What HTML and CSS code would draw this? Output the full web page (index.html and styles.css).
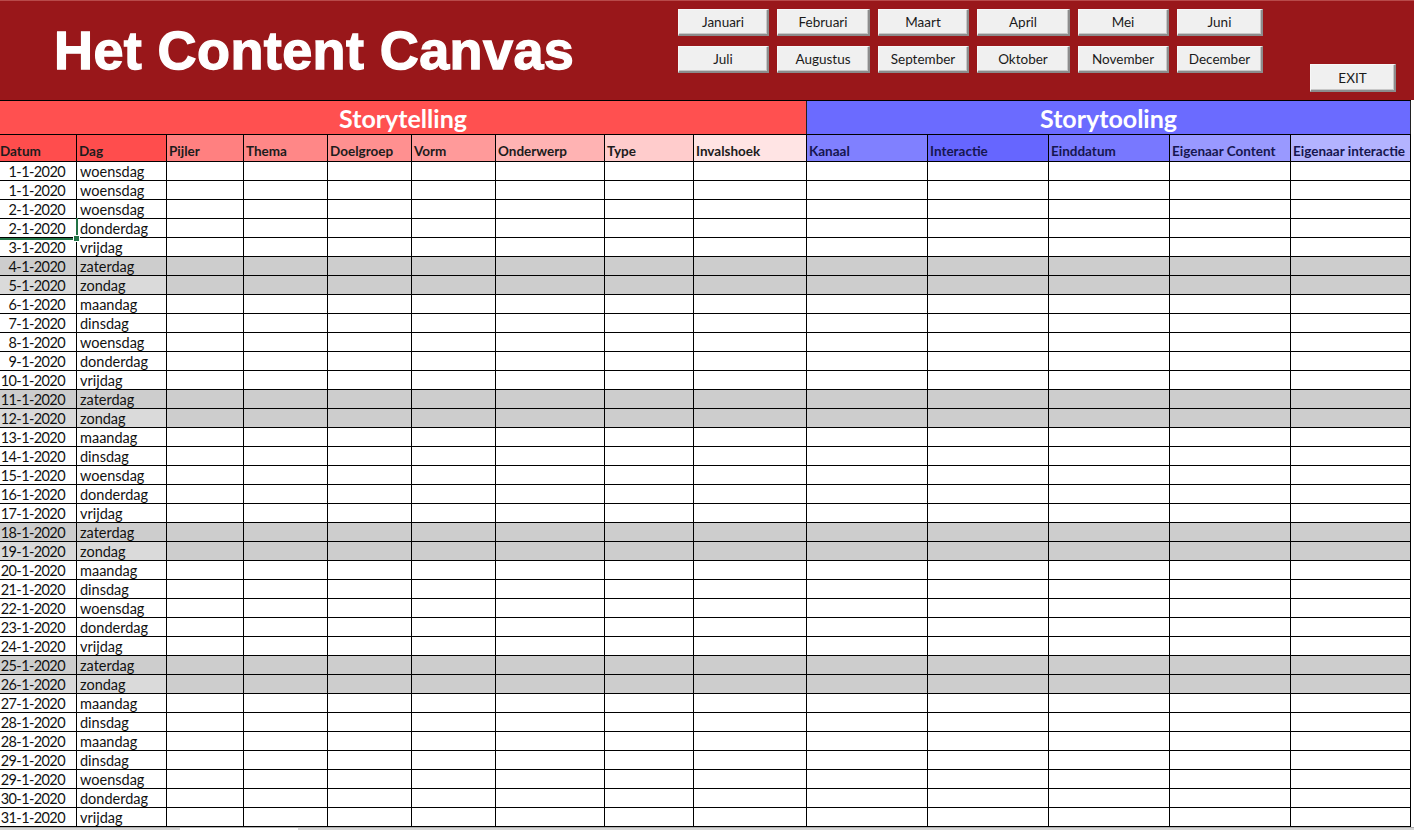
FILE: index.html
```html
<!DOCTYPE html>
<html lang="nl">
<head>
<meta charset="utf-8">
<title>Het Content Canvas</title>
<link rel="stylesheet" href="styles.css">
</head>
<body>
<div class="topbar">
  <h1 class="title">Het Content Canvas</h1>
  <div class="months">
    <button class="btn">Januari</button>
    <button class="btn">Februari</button>
    <button class="btn">Maart</button>
    <button class="btn">April</button>
    <button class="btn">Mei</button>
    <button class="btn">Juni</button>
    <button class="btn">Juli</button>
    <button class="btn">Augustus</button>
    <button class="btn">September</button>
    <button class="btn">Oktober</button>
    <button class="btn">November</button>
    <button class="btn">December</button>
  </div>
  <button class="btn exit">EXIT</button>
</div>

<div class="sheet">
  <div class="band">
    <div class="band-cell telling">Storytelling</div>
    <div class="band-cell tooling">Storytooling</div>
  </div>
  <div class="row head">
    <div class="c h1">Datum</div>
    <div class="c h2">Dag</div>
    <div class="c h3">Pijler</div>
    <div class="c h4">Thema</div>
    <div class="c h5">Doelgroep</div>
    <div class="c h6">Vorm</div>
    <div class="c h7">Onderwerp</div>
    <div class="c h8">Type</div>
    <div class="c h9">Invalshoek</div>
    <div class="c b1">Kanaal</div>
    <div class="c b2">Interactie</div>
    <div class="c b3">Einddatum</div>
    <div class="c b4">Eigenaar Content</div>
    <div class="c b5">Eigenaar interactie</div>
  </div>

  <div class="row"><div class="c d">1-1-2020</div><div class="c">woensdag</div><div class="c"></div><div class="c"></div><div class="c"></div><div class="c"></div><div class="c"></div><div class="c"></div><div class="c"></div><div class="c"></div><div class="c"></div><div class="c"></div><div class="c"></div><div class="c"></div></div>
  <div class="row"><div class="c d">1-1-2020</div><div class="c">woensdag</div><div class="c"></div><div class="c"></div><div class="c"></div><div class="c"></div><div class="c"></div><div class="c"></div><div class="c"></div><div class="c"></div><div class="c"></div><div class="c"></div><div class="c"></div><div class="c"></div></div>
  <div class="row"><div class="c d">2-1-2020</div><div class="c">woensdag</div><div class="c"></div><div class="c"></div><div class="c"></div><div class="c"></div><div class="c"></div><div class="c"></div><div class="c"></div><div class="c"></div><div class="c"></div><div class="c"></div><div class="c"></div><div class="c"></div></div>
  <div class="row"><div class="c d sel">2-1-2020</div><div class="c">donderdag</div><div class="c"></div><div class="c"></div><div class="c"></div><div class="c"></div><div class="c"></div><div class="c"></div><div class="c"></div><div class="c"></div><div class="c"></div><div class="c"></div><div class="c"></div><div class="c"></div></div>
  <div class="row"><div class="c d">3-1-2020</div><div class="c">vrijdag</div><div class="c"></div><div class="c"></div><div class="c"></div><div class="c"></div><div class="c"></div><div class="c"></div><div class="c"></div><div class="c"></div><div class="c"></div><div class="c"></div><div class="c"></div><div class="c"></div></div>
  <div class="row sat"><div class="c d">4-1-2020</div><div class="c">zaterdag</div><div class="c"></div><div class="c"></div><div class="c"></div><div class="c"></div><div class="c"></div><div class="c"></div><div class="c"></div><div class="c"></div><div class="c"></div><div class="c"></div><div class="c"></div><div class="c"></div></div>
  <div class="row sun"><div class="c d">5-1-2020</div><div class="c">zondag</div><div class="c"></div><div class="c"></div><div class="c"></div><div class="c"></div><div class="c"></div><div class="c"></div><div class="c"></div><div class="c"></div><div class="c"></div><div class="c"></div><div class="c"></div><div class="c"></div></div>
  <div class="row"><div class="c d">6-1-2020</div><div class="c">maandag</div><div class="c"></div><div class="c"></div><div class="c"></div><div class="c"></div><div class="c"></div><div class="c"></div><div class="c"></div><div class="c"></div><div class="c"></div><div class="c"></div><div class="c"></div><div class="c"></div></div>
  <div class="row"><div class="c d">7-1-2020</div><div class="c">dinsdag</div><div class="c"></div><div class="c"></div><div class="c"></div><div class="c"></div><div class="c"></div><div class="c"></div><div class="c"></div><div class="c"></div><div class="c"></div><div class="c"></div><div class="c"></div><div class="c"></div></div>
  <div class="row"><div class="c d">8-1-2020</div><div class="c">woensdag</div><div class="c"></div><div class="c"></div><div class="c"></div><div class="c"></div><div class="c"></div><div class="c"></div><div class="c"></div><div class="c"></div><div class="c"></div><div class="c"></div><div class="c"></div><div class="c"></div></div>
  <div class="row"><div class="c d">9-1-2020</div><div class="c">donderdag</div><div class="c"></div><div class="c"></div><div class="c"></div><div class="c"></div><div class="c"></div><div class="c"></div><div class="c"></div><div class="c"></div><div class="c"></div><div class="c"></div><div class="c"></div><div class="c"></div></div>
  <div class="row"><div class="c d">10-1-2020</div><div class="c">vrijdag</div><div class="c"></div><div class="c"></div><div class="c"></div><div class="c"></div><div class="c"></div><div class="c"></div><div class="c"></div><div class="c"></div><div class="c"></div><div class="c"></div><div class="c"></div><div class="c"></div></div>
  <div class="row sat"><div class="c d">11-1-2020</div><div class="c">zaterdag</div><div class="c"></div><div class="c"></div><div class="c"></div><div class="c"></div><div class="c"></div><div class="c"></div><div class="c"></div><div class="c"></div><div class="c"></div><div class="c"></div><div class="c"></div><div class="c"></div></div>
  <div class="row sun"><div class="c d">12-1-2020</div><div class="c">zondag</div><div class="c"></div><div class="c"></div><div class="c"></div><div class="c"></div><div class="c"></div><div class="c"></div><div class="c"></div><div class="c"></div><div class="c"></div><div class="c"></div><div class="c"></div><div class="c"></div></div>
  <div class="row"><div class="c d">13-1-2020</div><div class="c">maandag</div><div class="c"></div><div class="c"></div><div class="c"></div><div class="c"></div><div class="c"></div><div class="c"></div><div class="c"></div><div class="c"></div><div class="c"></div><div class="c"></div><div class="c"></div><div class="c"></div></div>
  <div class="row"><div class="c d">14-1-2020</div><div class="c">dinsdag</div><div class="c"></div><div class="c"></div><div class="c"></div><div class="c"></div><div class="c"></div><div class="c"></div><div class="c"></div><div class="c"></div><div class="c"></div><div class="c"></div><div class="c"></div><div class="c"></div></div>
  <div class="row"><div class="c d">15-1-2020</div><div class="c">woensdag</div><div class="c"></div><div class="c"></div><div class="c"></div><div class="c"></div><div class="c"></div><div class="c"></div><div class="c"></div><div class="c"></div><div class="c"></div><div class="c"></div><div class="c"></div><div class="c"></div></div>
  <div class="row"><div class="c d">16-1-2020</div><div class="c">donderdag</div><div class="c"></div><div class="c"></div><div class="c"></div><div class="c"></div><div class="c"></div><div class="c"></div><div class="c"></div><div class="c"></div><div class="c"></div><div class="c"></div><div class="c"></div><div class="c"></div></div>
  <div class="row"><div class="c d">17-1-2020</div><div class="c">vrijdag</div><div class="c"></div><div class="c"></div><div class="c"></div><div class="c"></div><div class="c"></div><div class="c"></div><div class="c"></div><div class="c"></div><div class="c"></div><div class="c"></div><div class="c"></div><div class="c"></div></div>
  <div class="row sat"><div class="c d">18-1-2020</div><div class="c">zaterdag</div><div class="c"></div><div class="c"></div><div class="c"></div><div class="c"></div><div class="c"></div><div class="c"></div><div class="c"></div><div class="c"></div><div class="c"></div><div class="c"></div><div class="c"></div><div class="c"></div></div>
  <div class="row sun"><div class="c d">19-1-2020</div><div class="c">zondag</div><div class="c"></div><div class="c"></div><div class="c"></div><div class="c"></div><div class="c"></div><div class="c"></div><div class="c"></div><div class="c"></div><div class="c"></div><div class="c"></div><div class="c"></div><div class="c"></div></div>
  <div class="row"><div class="c d">20-1-2020</div><div class="c">maandag</div><div class="c"></div><div class="c"></div><div class="c"></div><div class="c"></div><div class="c"></div><div class="c"></div><div class="c"></div><div class="c"></div><div class="c"></div><div class="c"></div><div class="c"></div><div class="c"></div></div>
  <div class="row"><div class="c d">21-1-2020</div><div class="c">dinsdag</div><div class="c"></div><div class="c"></div><div class="c"></div><div class="c"></div><div class="c"></div><div class="c"></div><div class="c"></div><div class="c"></div><div class="c"></div><div class="c"></div><div class="c"></div><div class="c"></div></div>
  <div class="row"><div class="c d">22-1-2020</div><div class="c">woensdag</div><div class="c"></div><div class="c"></div><div class="c"></div><div class="c"></div><div class="c"></div><div class="c"></div><div class="c"></div><div class="c"></div><div class="c"></div><div class="c"></div><div class="c"></div><div class="c"></div></div>
  <div class="row"><div class="c d">23-1-2020</div><div class="c">donderdag</div><div class="c"></div><div class="c"></div><div class="c"></div><div class="c"></div><div class="c"></div><div class="c"></div><div class="c"></div><div class="c"></div><div class="c"></div><div class="c"></div><div class="c"></div><div class="c"></div></div>
  <div class="row"><div class="c d">24-1-2020</div><div class="c">vrijdag</div><div class="c"></div><div class="c"></div><div class="c"></div><div class="c"></div><div class="c"></div><div class="c"></div><div class="c"></div><div class="c"></div><div class="c"></div><div class="c"></div><div class="c"></div><div class="c"></div></div>
  <div class="row sat"><div class="c d">25-1-2020</div><div class="c">zaterdag</div><div class="c"></div><div class="c"></div><div class="c"></div><div class="c"></div><div class="c"></div><div class="c"></div><div class="c"></div><div class="c"></div><div class="c"></div><div class="c"></div><div class="c"></div><div class="c"></div></div>
  <div class="row sun"><div class="c d">26-1-2020</div><div class="c">zondag</div><div class="c"></div><div class="c"></div><div class="c"></div><div class="c"></div><div class="c"></div><div class="c"></div><div class="c"></div><div class="c"></div><div class="c"></div><div class="c"></div><div class="c"></div><div class="c"></div></div>
  <div class="row"><div class="c d">27-1-2020</div><div class="c">maandag</div><div class="c"></div><div class="c"></div><div class="c"></div><div class="c"></div><div class="c"></div><div class="c"></div><div class="c"></div><div class="c"></div><div class="c"></div><div class="c"></div><div class="c"></div><div class="c"></div></div>
  <div class="row"><div class="c d">28-1-2020</div><div class="c">dinsdag</div><div class="c"></div><div class="c"></div><div class="c"></div><div class="c"></div><div class="c"></div><div class="c"></div><div class="c"></div><div class="c"></div><div class="c"></div><div class="c"></div><div class="c"></div><div class="c"></div></div>
  <div class="row"><div class="c d">28-1-2020</div><div class="c">maandag</div><div class="c"></div><div class="c"></div><div class="c"></div><div class="c"></div><div class="c"></div><div class="c"></div><div class="c"></div><div class="c"></div><div class="c"></div><div class="c"></div><div class="c"></div><div class="c"></div></div>
  <div class="row"><div class="c d">29-1-2020</div><div class="c">dinsdag</div><div class="c"></div><div class="c"></div><div class="c"></div><div class="c"></div><div class="c"></div><div class="c"></div><div class="c"></div><div class="c"></div><div class="c"></div><div class="c"></div><div class="c"></div><div class="c"></div></div>
  <div class="row"><div class="c d">29-1-2020</div><div class="c">woensdag</div><div class="c"></div><div class="c"></div><div class="c"></div><div class="c"></div><div class="c"></div><div class="c"></div><div class="c"></div><div class="c"></div><div class="c"></div><div class="c"></div><div class="c"></div><div class="c"></div></div>
  <div class="row"><div class="c d">30-1-2020</div><div class="c">donderdag</div><div class="c"></div><div class="c"></div><div class="c"></div><div class="c"></div><div class="c"></div><div class="c"></div><div class="c"></div><div class="c"></div><div class="c"></div><div class="c"></div><div class="c"></div><div class="c"></div></div>
  <div class="row"><div class="c d">31-1-2020</div><div class="c">vrijdag</div><div class="c"></div><div class="c"></div><div class="c"></div><div class="c"></div><div class="c"></div><div class="c"></div><div class="c"></div><div class="c"></div><div class="c"></div><div class="c"></div><div class="c"></div><div class="c"></div></div>
</div>
<div class="bottom"><div class="tab-gap"></div><div class="tab"></div></div>
</body>
</html>
```

FILE: styles.css
```css
* { box-sizing: border-box; }
html, body { margin: 0; padding: 0; }
body {
  width: 1414px;
  height: 830px;
  overflow: hidden;
  background: #ffffff;
  font-family: Lato, "Liberation Sans", sans-serif;
  color: #111;
}

.topbar {
  height: 100px;
  background: #99171a;
  border-top: 1px solid #b84a4a;
  display: flex;
  align-items: flex-start;
  padding-top: 8px;
}
.title {
  margin: 14px 0 0 0;
  padding-left: 54px;
  width: 678px;
  font-family: "Liberation Sans", Arial, sans-serif;
  font-weight: bold;
  font-size: 54px;
  line-height: 54px;
  letter-spacing: 0.4px;
  color: #ffffff;
  -webkit-text-stroke: 1.3px #ffffff;
  white-space: nowrap;
}
.months {
  display: grid;
  grid-template-columns: 91px 93px 91px 93px 91px 86px;
  grid-auto-rows: 27px;
  column-gap: 8px;
  row-gap: 10px;
}
.btn {
  margin: 0;
  padding: 0;
  font-family: Lato, "Liberation Sans", sans-serif;
  font-size: 13.5px;
  color: #1a1a1a;
  background: #f0f0f0;
  border: 1px solid #f7f7f7;
  border-right: 2px solid #8c8c8c;
  border-bottom: 2px solid #8c8c8c;
  box-shadow: inset -1px -1px 0 #c8c8c8;
}
.exit {
  width: 86px;
  height: 28px;
  margin-left: 47px;
  margin-top: 55px;
}

.sheet { width: 1411px; }
.band {
  display: grid;
  grid-template-columns: 807px 604px;
  height: 35px;
  border-top: 1px solid #000;
  border-bottom: 1px solid #000;
}
.band-cell {
  display: flex;
  align-items: center;
  justify-content: center;
  padding-top: 1px;
  color: #ffffff;
  font-weight: bold;
  font-size: 25px;
  border-right: 1px solid #222;
}
.telling { background: #ff5050; }
.tooling { background: #6b6bff; }

.row {
  display: grid;
  grid-template-columns: 77px 90px 77px 84px 84px 84px 109px 89px 113px 121px 121px 121px 121px 120px;
  height: 19px;
  border-bottom: 1px solid #000;
}
.row.head { height: 27px; }
.c {
  border-right: 1px solid #000;
  font-size: 14.5px;
  line-height: 18px;
  padding-left: 3px;
  padding-top: 1px;
  white-space: nowrap;
  overflow: hidden;
}
.head .c {
  font-weight: bold;
  font-size: 13.5px;
  display: flex;
  align-items: flex-end;
  padding-left: 2px;
  padding-top: 0;
  padding-bottom: 0;
  line-height: 19px;
  color: #1c1c1c;
}
.head .h1 { padding-left: 0; }
.h1 { background: #ff4d4d; }
.h2 { background: #ff4d4d; }
.h3 { background: #ff8080; }
.h4 { background: #ff8787; }
.h5 { background: #ff9090; }
.h6 { background: #ff9a9a; }
.h7 { background: #ffb3b3; }
.h8 { background: #ffcccc; }
.h9 { background: #ffe4e4; }
.head .b1, .head .b2, .head .b3, .head .b4, .head .b5 { color: #161650; }
.b1 { background: #8080ff; }
.b2 { background: #6666ff; }
.b3 { background: #7878ff; }
.b4 { background: #9999ff; }
.b5 { background: #b3b3ff; }

.c.d {
  text-align: right;
  padding-left: 0;
  padding-right: 11px;
  letter-spacing: -0.6px;
}
.sat .c { background: #cdcdcd; }
.sun .c { background: #cdcdcd; }
.sun .c:nth-child(-n+2) { background: #dadada; }

.sel { position: relative; overflow: visible; }
.sel::after {
  content: "";
  position: absolute;
  left: -2px;
  top: -1px;
  right: -2px;
  bottom: -2px;
  border-right: 2px solid #217346;
  border-bottom: 2px solid #217346;
}
.sel::before {
  content: "";
  position: absolute;
  right: -4px;
  bottom: -4px;
  width: 5px;
  height: 5px;
  background: #217346;
  border: 1px solid #fff;
  z-index: 2;
}

.bottom {
  display: flex;
  height: 4px;
  background: #d6d6d6;
  border-top: 1px solid #b0b0b0;
}
.tab-gap { width: 180px; }
.tab { width: 118px; background: #ffffff; }
```
